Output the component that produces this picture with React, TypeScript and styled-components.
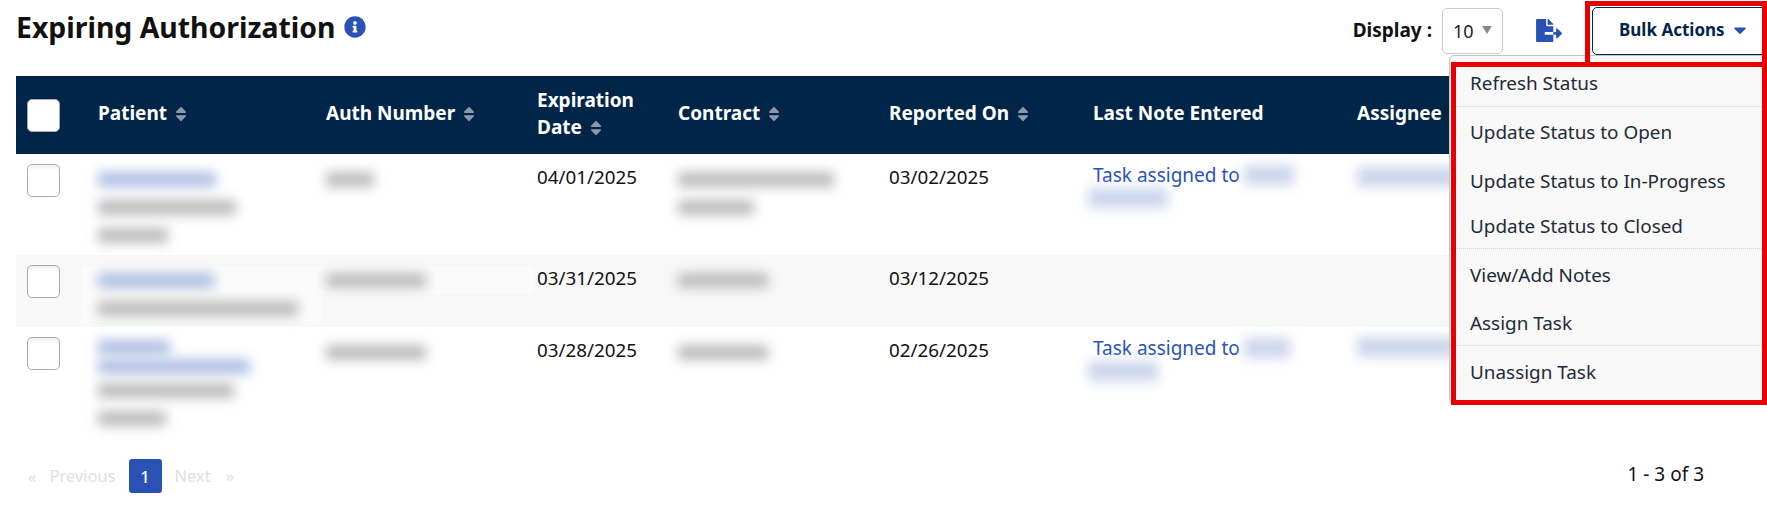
import React from 'react';
import styled, { createGlobalStyle } from 'styled-components';
import { FaCaretDown, FaFileExport, FaInfoCircle, FaSort } from 'react-icons/fa';

const GlobalStyle = createGlobalStyle`
  html, body {
    margin: 0;
    padding: 0;
    background: #fff;
    font-family: "Noto Sans", "Open Sans", sans-serif;
    color: #111;
  }
`;

const Page = styled.div`
  position: relative;
  width: 1767px;
  height: 511px;
  overflow: hidden;
  background: #fff;
`;

const Toolbar = styled.div`
  display: flex;
  align-items: flex-start;
  justify-content: space-between;
  height: 76px;
  padding-left: 16px;
`;

const TitleRow = styled.div`
  display: flex;
  align-items: center;
  gap: 8px;
  height: 54px;
`;

const Title = styled.h1`
  margin: 0;
  font-size: 28.4px;
  font-weight: 700;
  color: #111;
`;

const InfoIcon = styled(FaInfoCircle)`
  width: 22px;
  height: 22px;
  color: #2a52b5;
`;

const Controls = styled.div`
  display: flex;
  align-items: center;
  height: 48px;
  margin-top: 6px;
`;

const DisplayLabel = styled.span`
  font-size: 19px;
  font-weight: 700;
  margin-right: 10px;
`;

const Select = styled.div`
  display: flex;
  align-items: center;
  justify-content: space-between;
  box-sizing: border-box;
  width: 61px;
  height: 46px;
  margin-top: 2px;
  padding: 0 10px;
  border: 1px solid #ccc;
  border-radius: 5px;
  font-size: 18px;
  color: #222;
`;

const SelectCaret = styled.span`
  width: 0;
  height: 0;
  margin-top: -3px;
  border-left: 5.5px solid transparent;
  border-right: 5.5px solid transparent;
  border-top: 8px solid #888;
`;

const ExportIcon = styled(FaFileExport)`
  width: 30px;
  height: 23px;
  margin: 0 28px 0 31px;
  color: #2a52b5;
`;

const BulkButton = styled.button`
  display: flex;
  align-items: center;
  box-sizing: border-box;
  width: 175px;
  height: 48px;
  margin-top: 1px;
  padding: 0 0 2px 26px;
  background: #fff;
  border: 1px solid #00264d;
  border-radius: 5px;
  font-family: inherit;
  font-size: 17px;
  font-weight: 700;
  color: #00264d;
`;

const BulkCaret = styled(FaCaretDown)`
  width: 20px;
  height: 20px;
  margin-left: 5px;
  color: #2a52b5;
`;

const Table = styled.table`
  width: 1751px;
  margin-left: 16px;
  table-layout: fixed;
  border-collapse: collapse;
`;

const Col = styled.col<{ $w: number }>`
  width: ${(p) => p.$w}px;
`;

const HeadRow = styled.tr`
  height: 78px;
  background: #002548;
`;

const Th = styled.th`
  padding: 0 10px 3px;
  font-size: 19px;
  font-weight: 700;
  line-height: 27px;
  text-align: left;
  vertical-align: middle;
  color: #fff;
`;

const SortIcon = styled(FaSort)`
  width: 12px;
  height: 18px;
  margin-left: 8px;
  vertical-align: -3px;
  color: #8d99a8;
`;

const Row = styled.tr<{ $h: number; $shade?: boolean }>`
  height: ${(p) => p.$h}px;
  background: ${(p) => (p.$shade ? '#f8f8f8' : '#fff')};
`;

const Td = styled.td`
  padding: 11px 10px 0;
  font-size: 18.8px;
  line-height: 24px;
  vertical-align: top;
  color: #111;
`;

const CheckCell = styled(Td)`
  padding: 10px 0 0 11px;
`;

const HeadCheckCell = styled(Th)`
  padding: 0 0 0 11px;
`;

const Check = styled.input.attrs({ type: 'checkbox' })<{ $head?: boolean }>`
  appearance: none;
  display: block;
  box-sizing: border-box;
  width: 33px;
  height: 33px;
  margin: 0;
  background: #fff;
  border: 1px solid #aaa;
  border-radius: 5px;
  box-shadow: ${(p) => (p.$head ? 'none' : 'inset 0 5px 4px -2px rgba(0, 0, 0, 0.06)')};
`;

const BlurStack = styled.div<{ $patch?: boolean }>`
  margin: 0 -16px;
  padding: 0 16px;
  background: ${(p) => (p.$patch ? '#fbfbfb' : 'transparent')};
`;

const BlurLine = styled.div<{ $h?: number }>`
  display: flex;
  align-items: center;
  height: ${(p) => p.$h ?? 28}px;
`;

const BlurBar = styled.span<{ $w: number; $blue?: boolean }>`
  display: block;
  width: ${(p) => p.$w}px;
  height: 15px;
  background: ${(p) => (p.$blue ? '#afc0e3' : '#bcbcbc')};
  filter: blur(6px);
`;

const NoteCol = styled(Td)`
  padding-top: 9px;
`;

const NoteText = styled.span`
  color: #2a52b5;
  font-size: 19px;
`;

const NoteLine = styled.div`
  display: flex;
  align-items: center;
  gap: 4px;
  height: 23px;
`;

const NoteBar = styled(BlurBar)`
  height: 20px;
  background: #cdd6ec;
`;

const NoteTail = styled(NoteBar)`
  margin-left: -5px;
`;

const Footer = styled.div`
  display: flex;
  align-items: center;
  justify-content: space-between;
  height: 34px;
  margin-top: 12px;
  padding: 0 63px 0 28px;
`;

const Pager = styled.div`
  display: flex;
  align-items: center;
  font-size: 16.5px;
  color: #dfdfdf;
`;

const PagerLabel = styled.span<{ $gap: number }>`
  margin-left: ${(p) => p.$gap}px;
  padding-bottom: 2px;
`;

const PageButton = styled.span`
  display: flex;
  align-items: center;
  justify-content: center;
  width: 33px;
  height: 34px;
  margin-left: 13px;
  background: #2a52b5;
  border-radius: 3px;
  font-weight: 500;
  color: #fff;
`;

const RangeText = styled.span`
  padding-bottom: 4px;
  font-size: 19px;
  color: #111;
`;

const Menu = styled.div`
  position: absolute;
  top: 55px;
  left: 1449px;
  box-sizing: border-box;
  width: 330px;
  height: 349px;
  padding-top: 3px;
  background: #f8f8f8;
  border: 1px solid #c4c4c4;
  border-radius: 5px;
`;

const MenuItem = styled.div<{ $h: number }>`
  display: flex;
  align-items: center;
  height: ${(p) => p.$h}px;
  padding-left: 20px;
  font-size: 18.9px;
  color: #212b36;
`;

const MenuDivider = styled.div`
  border-top: 1px dotted #d4d4d4;
`;

const Callout = styled.div<{ $x: number; $y: number; $w: number; $h: number }>`
  position: absolute;
  left: ${(p) => p.$x}px;
  top: ${(p) => p.$y}px;
  box-sizing: border-box;
  width: ${(p) => p.$w}px;
  height: ${(p) => p.$h}px;
  border: 5px solid #e60000;
  pointer-events: none;
`;

function SortHead({ children }: { children: React.ReactNode }) {
  return (
    <Th>
      {children}
      <SortIcon />
    </Th>
  );
}

function NoteCell({ first, second }: { first: number; second: number }) {
  return (
    <NoteCol>
      <NoteLine>
        <NoteText>Task assigned to</NoteText>
        <NoteBar $w={first} />
      </NoteLine>
      <NoteLine>
        <NoteTail $w={second} />
      </NoteLine>
    </NoteCol>
  );
}

export default function App() {
  return (
    <Page>
      <GlobalStyle />
      <Toolbar>
        <TitleRow>
          <Title>Expiring Authorization</Title>
          <InfoIcon />
        </TitleRow>
        <Controls>
          <DisplayLabel>Display :</DisplayLabel>
          <Select>
            10
            <SelectCaret />
          </Select>
          <ExportIcon />
          <BulkButton>
            Bulk Actions
            <BulkCaret />
          </BulkButton>
        </Controls>
      </Toolbar>

      <Table>
        <colgroup>
          <Col $w={72} />
          <Col $w={228} />
          <Col $w={211} />
          <Col $w={141} />
          <Col $w={211} />
          <Col $w={204} />
          <Col $w={264} />
          <Col $w={420} />
        </colgroup>
        <thead>
          <HeadRow>
            <HeadCheckCell>
              <Check $head />
            </HeadCheckCell>
            <SortHead>Patient</SortHead>
            <SortHead>Auth Number</SortHead>
            <SortHead>Expiration Date</SortHead>
            <SortHead>Contract</SortHead>
            <SortHead>Reported On</SortHead>
            <Th>Last Note Entered</Th>
            <Th>Assignee</Th>
          </HeadRow>
        </thead>
        <tbody>
          <Row $h={101}>
            <CheckCell><Check /></CheckCell>
            <Td>
              <BlurLine><BlurBar $blue $w={118} /></BlurLine>
              <BlurLine><BlurBar $w={138} /></BlurLine>
              <BlurLine><BlurBar $w={70} /></BlurLine>
            </Td>
            <Td><BlurLine><BlurBar $w={48} /></BlurLine></Td>
            <Td>04/01/2025</Td>
            <Td>
              <BlurLine><BlurBar $w={156} /></BlurLine>
              <BlurLine><BlurBar $w={76} /></BlurLine>
            </Td>
            <Td>03/02/2025</Td>
            <NoteCell first={50} second={80} />
            <NoteCol><BlurLine><NoteBar $w={100} /></BlurLine></NoteCol>
          </Row>
          <Row $h={72} $shade>
            <CheckCell><Check /></CheckCell>
            <Td>
              <BlurStack $patch>
                <BlurLine><BlurBar $blue $w={116} /></BlurLine>
                <BlurLine><BlurBar $w={200} /></BlurLine>
              </BlurStack>
            </Td>
            <Td><BlurStack $patch><BlurLine><BlurBar $w={100} /></BlurLine></BlurStack></Td>
            <Td>03/31/2025</Td>
            <Td><BlurLine><BlurBar $w={90} /></BlurLine></Td>
            <Td>03/12/2025</Td>
            <Td />
            <Td />
          </Row>
          <Row $h={120}>
            <CheckCell><Check /></CheckCell>
            <Td>
              <BlurLine $h={18}><BlurBar $blue $w={72} /></BlurLine>
              <BlurLine $h={20}><BlurBar $blue $w={152} /></BlurLine>
              <BlurLine><BlurBar $w={136} /></BlurLine>
              <BlurLine><BlurBar $w={68} /></BlurLine>
            </Td>
            <Td><BlurLine><BlurBar $w={100} /></BlurLine></Td>
            <Td>03/28/2025</Td>
            <Td><BlurLine><BlurBar $w={90} /></BlurLine></Td>
            <Td>02/26/2025</Td>
            <NoteCell first={46} second={70} />
            <NoteCol><BlurLine $h={22}><NoteBar $w={100} /></BlurLine></NoteCol>
          </Row>
        </tbody>
      </Table>

      <Footer>
        <Pager>
          «
          <PagerLabel $gap={13}>Previous</PagerLabel>
          <PageButton>1</PageButton>
          <PagerLabel $gap={13}>Next</PagerLabel>
          <PagerLabel $gap={15}>»</PagerLabel>
        </Pager>
        <RangeText>1 - 3 of 3</RangeText>
      </Footer>

      <Menu>
        <MenuItem $h={47}>Refresh Status</MenuItem>
        <MenuDivider />
        <MenuItem $h={50}>Update Status to Open</MenuItem>
        <MenuItem $h={47}>Update Status to In-Progress</MenuItem>
        <MenuItem $h={44}>Update Status to Closed</MenuItem>
        <MenuDivider />
        <MenuItem $h={52}>View/Add Notes</MenuItem>
        <MenuItem $h={44}>Assign Task</MenuItem>
        <MenuDivider />
        <MenuItem $h={52}>Unassign Task</MenuItem>
      </Menu>

      <Callout $x={1585} $y={1} $w={182} $h={66} />
      <Callout $x={1451} $y={62} $w={316} $h={343} />
    </Page>
  );
}
